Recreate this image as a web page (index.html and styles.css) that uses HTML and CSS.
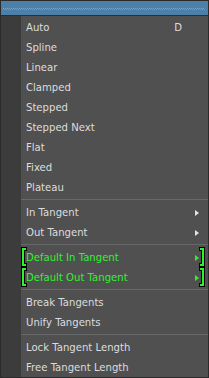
FILE: index.html
```html
<!DOCTYPE html>
<html lang="en">

<head>
    <meta charset="UTF-8">
    <meta name="viewport" content="width=device-width, initial-scale=1.0">
    <title>Tangents Menu</title>
    <link rel="stylesheet" href="styles.css">
</head>

<body>
<div class="menu">
    <div class="tearoff"></div>
    <div class="menu-body">
        <div class="gutter"></div>
        <div class="items">
            <div class="item"><span class="label">Auto</span><span class="key">D</span></div>
            <div class="item"><span class="label">Spline</span></div>
            <div class="item"><span class="label">Linear</span></div>
            <div class="item"><span class="label">Clamped</span></div>
            <div class="item"><span class="label">Stepped</span></div>
            <div class="item"><span class="label">Stepped Next</span></div>
            <div class="item"><span class="label">Flat</span></div>
            <div class="item"><span class="label">Fixed</span></div>
            <div class="item"><span class="label">Plateau</span></div>
            <div class="sep"></div>
            <div class="item"><span class="label">In Tangent</span><span class="arrow"></span></div>
            <div class="item"><span class="label">Out Tangent</span><span class="arrow"></span></div>
            <div class="sep"></div>
            <div class="item marked"><span class="label">Default In Tangent</span><span class="arrow"></span></div>
            <div class="item marked"><span class="label">Default Out Tangent</span><span class="arrow"></span></div>
            <div class="sep"></div>
            <div class="item"><span class="label">Break Tangents</span></div>
            <div class="item"><span class="label">Unify Tangents</span></div>
            <div class="sep"></div>
            <div class="item"><span class="label">Lock Tangent Length</span></div>
            <div class="item"><span class="label">Free Tangent Length</span></div>
        </div>
    </div>
</div>
</body>

</html>
```

FILE: styles.css
```css
body {
    margin: 0;
    padding: 0;
    background-color: #2b2b2b;
    font-family: 'DejaVu Sans', Verdana, sans-serif;
    font-size: 10.1px;
}

.menu {
    width: 207px;
    border: 1px solid #2b2b2b;
    background-color: #505050;
    overflow: hidden;
}

/* tear-off strip with its dotted grip line */
.tearoff {
    height: 14px;
    border-bottom: 1px solid #2e2e2e;
    background-color: #4d80a8;
    background-image:
        repeating-linear-gradient(to right, #8e9fb0 0 1px, transparent 1px 2px),
        repeating-linear-gradient(to right, transparent 0 1px, #7d93a8 1px 2px);
    background-size: 202px 1px, 202px 1px;
    background-position: 2px 7px, 2px 8px;
    background-repeat: no-repeat;
}

.menu-body {
    display: flex;
    padding-top: 1px;
    background-color: #505050;
}

.gutter {
    width: 20px;
    background-color: #3c3c3c;
    margin-top: -1px;
}

.items {
    flex: 1;
}

.item {
    position: relative;
    display: flex;
    align-items: center;
    height: 20px;
    padding-left: 5px;
    padding-top: 1px;
    box-sizing: border-box;
    color: #dddddd;
}

.label {
    flex: 1;
}

.key {
    margin-right: 26px;
}

.arrow {
    width: 0;
    height: 0;
    margin-right: 9px;
    border-left: 4px solid #e4e4e4;
    border-top: 3.5px solid transparent;
    border-bottom: 3.5px solid transparent;
}

.sep {
    height: 1px;
    margin: 2px 0;
    background-color: #686868;
}

.marked {
    color: #2ef22e;
}

.marked .arrow {
    border-left-color: #2ef22e;
}

.marked::before,
.marked::after {
    content: '';
    position: absolute;
    top: 1px;
    width: 2px;
    height: 14px;
    border: 2px solid #2ef22e;
    filter: drop-shadow(1px 0 0 #000) drop-shadow(-1px 0 0 #000) drop-shadow(0 1px 0 #000) drop-shadow(0 -1px 0 #000);
}

.marked::before {
    left: 1px;
    border-right: none;
}

.marked::after {
    right: 4px;
    border-left: none;
}
```
